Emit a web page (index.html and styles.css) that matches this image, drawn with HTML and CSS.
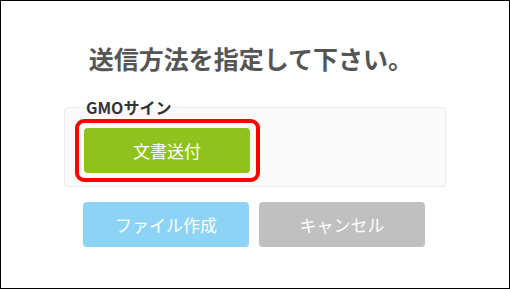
FILE: index.html
```html
<!DOCTYPE html>
<html lang="ja">
<head>
<meta charset="utf-8">
<link rel="stylesheet" href="styles.css">
</head>
<body>
<div class="frame">
  <h1 class="title">送信方法を指定して下さい。</h1>
  <fieldset class="group">
    <legend class="group-label">GMOサイン</legend>
    <button class="btn btn-green btn-marked">文書送付</button>
  </fieldset>
  <div class="actions">
    <button class="btn btn-blue">ファイル作成</button>
    <button class="btn btn-gray">キャンセル</button>
  </div>
</div>
</body>
</html>
```
FILE: styles.css
```css
html, body {
  margin: 0;
  padding: 0;
  background: #fff;
}
.frame {
  box-sizing: border-box;
  width: 510px;
  height: 289px;
  border: 1px solid #000;
  padding-top: 42px;
  font-family: "Noto Sans CJK JP", "Noto Sans", sans-serif;
}
.title {
  margin: 0;
  padding-right: 8px;
  text-align: center;
  font-size: 25px;
  line-height: 30px;
  font-weight: 700;
  color: #555;
}
.group {
  box-sizing: border-box;
  width: 382px;
  margin: 25px auto 0;
  padding: 12px 19px 13px;
  border: 1px solid #ececec;
  border-radius: 4px;
  background: #fafafa;
}
.group-label {
  padding: 0 2px;
  font-size: 16px;
  line-height: 18px;
  font-weight: 700;
  color: #333;
}
.btn {
  display: flex;
  align-items: center;
  justify-content: center;
  width: 166px;
  height: 45px;
  border: 0;
  border-radius: 4px;
  font-family: "Noto Sans CJK JP", "Noto Sans", sans-serif;
  font-size: 17px;
  color: #fff;
  padding: 0;
}
.btn-green { background: #8fc21f; }
.btn-blue { background: #8cd3f5; }
.btn-gray { background: #c0c0c0; }
.btn-marked {
  position: relative;
}
.btn-marked::after {
  content: "";
  position: absolute;
  left: -9px;
  right: -10px;
  top: -9px;
  bottom: -9px;
  border: 4px solid #ff0000;
  border-radius: 9px;
}
.actions {
  display: flex;
  justify-content: center;
  gap: 10px;
  margin-top: 15px;
  padding-right: 2px;
}
```
